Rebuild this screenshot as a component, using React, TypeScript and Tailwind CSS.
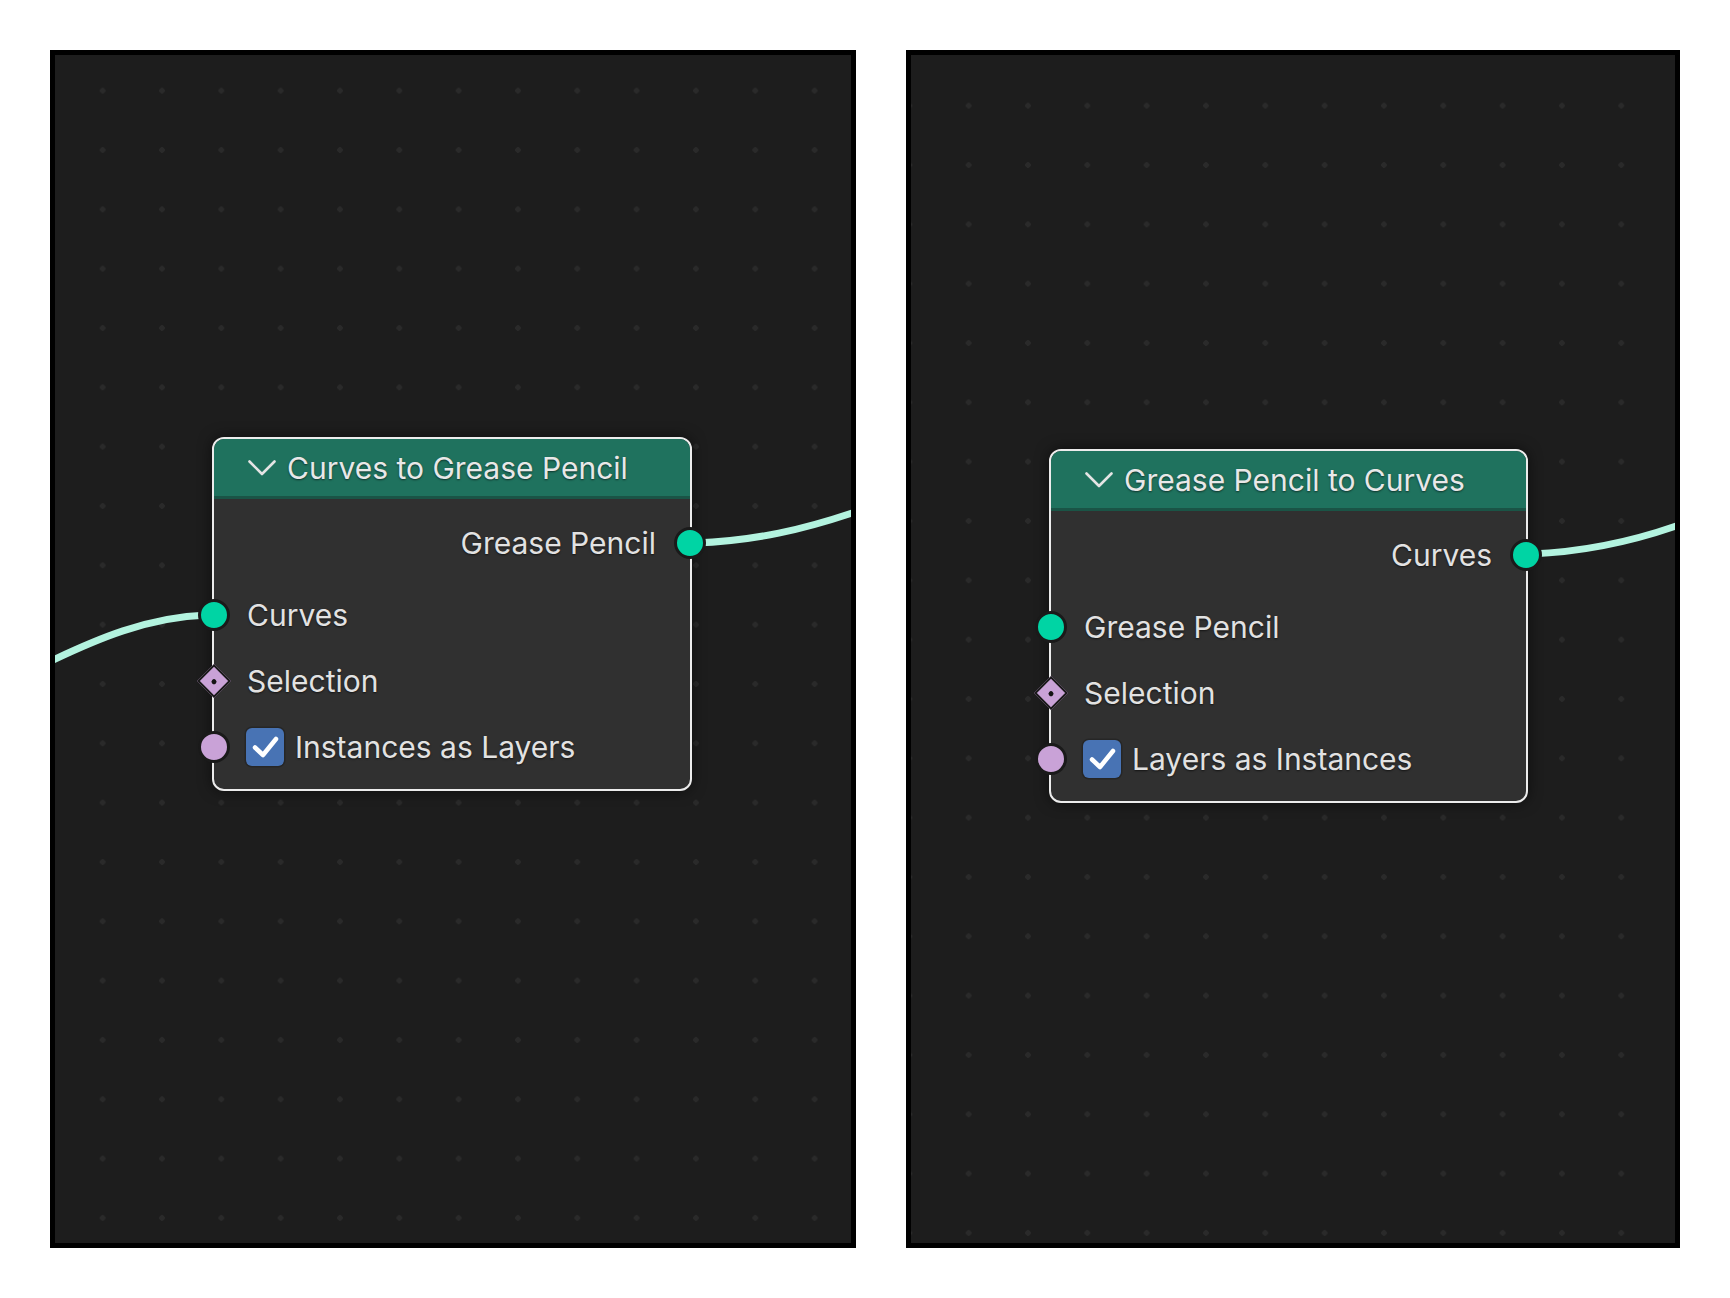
import React from "react";

type SocketKind = "geo" | "field" | "bool";

function Socket({ kind, side }: { kind: SocketKind; side: "left" | "right" }) {
  const pos = side === "left" ? "-left-[16px]" : "-right-[16px]";
  if (kind === "field") {
    return (
      <span className={`absolute ${pos} top-1/2 -translate-y-1/2 flex h-[32px] w-[32px] items-center justify-center`}>
        <span className="flex h-[24px] w-[24px] rotate-45 items-center justify-center border-[2.5px] border-[#1a1a1a] bg-[#c9a2d7]">
          <span className="h-[5px] w-[5px] rounded-full bg-[#141414]" />
        </span>
      </span>
    );
  }
  const fill = kind === "geo" ? "bg-[#00d4a4]" : "bg-[#c9a2d7]";
  return (
    <span
      className={`absolute ${pos} top-1/2 h-[32px] w-[32px] -translate-y-1/2 rounded-full border-[3px] border-[#1a1a1a] ${fill}`}
    />
  );
}

function Checkbox() {
  return (
    <span className="flex h-[38px] w-[38px] shrink-0 items-center justify-center rounded-[6px] bg-[#4873b4] shadow-[0_0_0_1.5px_#262626]">
      <svg width="38" height="38" viewBox="0 0 38 38">
        <polyline
          points="9,19.5 17,27 30,11"
          fill="none"
          stroke="#ffffff"
          strokeWidth="4.5"
          strokeLinecap="round"
          strokeLinejoin="round"
        />
      </svg>
    </span>
  );
}

function Node({
  title,
  output,
  input,
  toggle,
  className,
}: {
  title: string;
  output: string;
  input: string;
  toggle: string;
  className: string;
}) {
  return (
    <div
      className={`absolute ${className} h-[354px] overflow-visible rounded-[12px] border-2 border-[#ececec] bg-[#303030] shadow-[0_0_14px_rgba(0,0,0,0.55)]`}
    >
      <div className="flex h-[60px] items-center gap-[11px] rounded-t-[10px] border-b-[3px] border-[#1a5446] bg-[#1f725e] pl-[34px]">
        <svg width="28" height="16" viewBox="0 0 28 16" className="shrink-0">
          <polyline
            points="1.5,1.5 14,14 26.5,1.5"
            fill="none"
            stroke="#e4e4e4"
            strokeWidth="2.6"
            strokeLinecap="round"
            strokeLinejoin="round"
          />
        </svg>
        <span className="text-[#e8e8e8] [text-shadow:0_1px_2px_rgba(0,0,0,0.55)]">{title}</span>
      </div>
      <div className="flex flex-col pt-[14px] pb-[9px]">
        <div className="relative flex h-[60px] items-center justify-end pr-[34px]">
          <span className="[text-shadow:0_1px_2px_rgba(0,0,0,0.6)]">{output}</span>
          <Socket kind="geo" side="right" />
        </div>
        <div className="mt-[9px] relative flex h-[66px] items-center pl-[33px]">
          <Socket kind="geo" side="left" />
          <span className="[text-shadow:0_1px_2px_rgba(0,0,0,0.6)]">{input}</span>
        </div>
        <div className="relative flex h-[66px] items-center pl-[33px]">
          <Socket kind="field" side="left" />
          <span className="[text-shadow:0_1px_2px_rgba(0,0,0,0.6)]">Selection</span>
        </div>
        <div className="relative flex h-[66px] items-center gap-[11px] pl-[32px]">
          <Socket kind="bool" side="left" />
          <Checkbox />
          <span className="[text-shadow:0_1px_2px_rgba(0,0,0,0.6)]">{toggle}</span>
        </div>
      </div>
    </div>
  );
}

const wire = "#b3f3df";

export default function App() {
  return (
    <div className="flex h-[1298px] w-[1730px] gap-[50px] bg-white pl-[50px] pt-[50px] font-['Inter','Noto_Sans',sans-serif] text-[30px] leading-none text-[#e2e2e2]">
      {/* Curves to Grease Pencil */}
      <div className="relative h-[1198px] w-[806px] overflow-hidden border-[5px] border-black bg-[#1d1d1d] bg-[radial-gradient(circle,#2a2a2a_2.5px,transparent_3px)] bg-[length:59.33px_59.33px] bg-[position:18px_6px]">
        <svg className="absolute inset-0" width="796" height="1188" viewBox="0 0 796 1188">
          <path d="M -4 606 C 40 585, 92 562, 152 560" fill="none" stroke={wire} strokeWidth="7" />
          <path d="M 640 488 C 700 486, 750 474, 800 457" fill="none" stroke={wire} strokeWidth="7" />
        </svg>
        <Node
          className="left-[157px] top-[382px] w-[480px]"
          title="Curves to Grease Pencil"
          output="Grease Pencil"
          input="Curves"
          toggle="Instances as Layers"
        />
      </div>

      {/* Grease Pencil to Curves */}
      <div className="relative h-[1198px] w-[774px] overflow-hidden border-[5px] border-black bg-[#1d1d1d] bg-[radial-gradient(circle,#2a2a2a_2.5px,transparent_3px)] bg-[length:59.33px_59.33px] bg-[position:28px_21px]">
        <svg className="absolute inset-0" width="764" height="1188" viewBox="0 0 764 1188">
          <path d="M 620 499 C 670 497, 720 487, 768 470" fill="none" stroke={wire} strokeWidth="7" />
        </svg>
        <Node
          className="left-[138px] top-[394px] w-[479px]"
          title="Grease Pencil to Curves"
          output="Curves"
          input="Grease Pencil"
          toggle="Layers as Instances"
        />
      </div>
    </div>
  );
}
